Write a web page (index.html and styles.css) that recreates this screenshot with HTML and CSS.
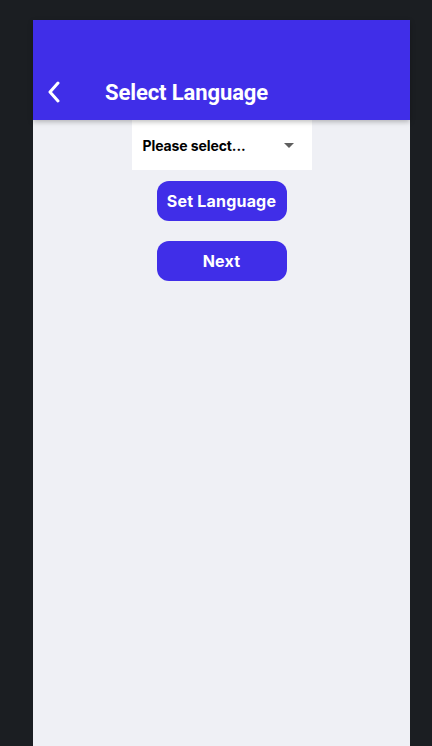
FILE: index.html
```html
<!DOCTYPE html>
<html lang="en">
<head>
<meta charset="utf-8">
<title>Select Language</title>
<link rel="stylesheet" href="styles.css">
</head>
<body>
<div class="phone">
  <header class="appbar">
    <div class="toolbar">
      <button class="back" aria-label="Back">
        <svg width="14" height="22" viewBox="0 0 14 22"><path d="M11 2 L3 11 L11 20" fill="none" stroke="#fff" stroke-width="3" stroke-linecap="round" stroke-linejoin="round"/></svg>
      </button>
      <h1 class="title">Select Language</h1>
    </div>
  </header>
  <main class="content">
    <div class="select">
      <span class="select-text">Please select...</span>
      <span class="caret"></span>
    </div>
    <button class="btn btn-first">Set Language</button>
    <button class="btn">Next</button>
  </main>
</div>
</body>
</html>
```
FILE: styles.css
```css
html, body {
  margin: 0;
  padding: 0;
  background: #1b1e22;
  height: 100%;
  overflow: hidden;
}
.phone {
  margin: 20px 0 0 33px;
  width: 377px;
  height: 726px;
  background: #eff0f5;
  display: flex;
  flex-direction: column;
}
.appbar {
  background: #402ee8;
  padding-top: 44px;
  box-shadow: 0 2px 5px rgba(0,0,0,0.25);
  position: relative;
  z-index: 1;
}
.toolbar {
  height: 56px;
  display: flex;
  align-items: center;
}
.back {
  background: none;
  border: 0;
  padding: 0;
  margin-left: 14px;
  width: 14px;
  height: 22px;
  display: flex;
}
.title {
  margin: 0 0 0 44px;
  color: #fff;
  font-family: Roboto, "Liberation Sans", sans-serif;
  font-weight: 700;
  font-size: 22px;
  letter-spacing: -0.1px;
}
.content {
  display: flex;
  flex-direction: column;
  align-items: center;
}
.select {
  width: 180px;
  height: 50px;
  background: #fff;
  box-sizing: border-box;
  padding: 0 18px 0 11px;
  display: flex;
  align-items: center;
  justify-content: space-between;
}
.select-text {
  font-family: Inter, "Noto Sans", sans-serif;
  font-weight: 700;
  font-size: 14px;
  color: #000;
  letter-spacing: -0.1px;
}
.caret {
  width: 0;
  height: 0;
  border-left: 5px solid transparent;
  border-right: 5px solid transparent;
  border-top: 5px solid #5f5f5f;
}
.btn {
  width: 130px;
  height: 40px;
  margin-top: 20px;
  border: 0;
  border-radius: 12px;
  background: #402ee8;
  color: #fff;
  font-family: Inter, "Noto Sans", sans-serif;
  font-weight: 700;
  font-size: 16px;
  letter-spacing: 0.2px;
  padding: 0;
}
.btn-first {
  margin-top: 11px;
}
```
